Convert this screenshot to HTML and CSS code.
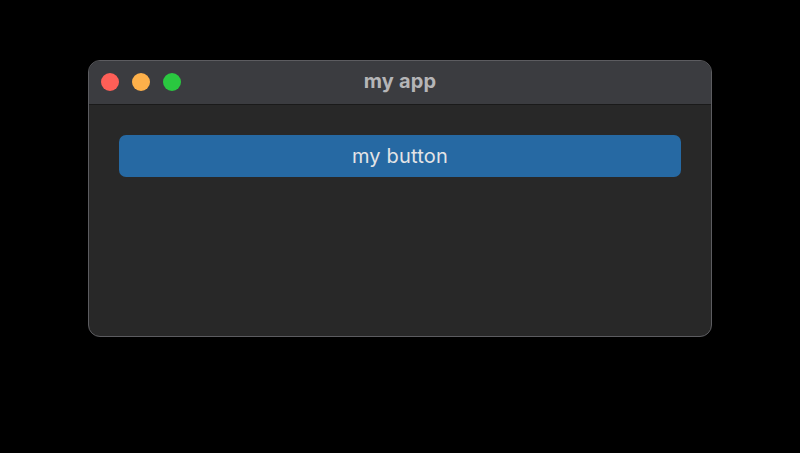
FILE: index.html
```html
<!DOCTYPE html>
<html>
<head>
<meta charset="utf-8">
<link rel="stylesheet" href="styles.css">
</head>
<body>
<div class="window">
  <div class="titlebar">
    <div class="lights">
      <span class="light red"></span>
      <span class="light yellow"></span>
      <span class="light green"></span>
    </div>
    <div class="title">my app</div>
  </div>
  <div class="content">
    <button class="btn">my button</button>
  </div>
</div>
</body>
</html>
```
FILE: styles.css
```css
html, body {
  margin: 0;
  background: #000;
  width: 800px;
  height: 453px;
  overflow: hidden;
}
body {
  padding: 60px 0 0 88px;
  box-sizing: border-box;
  font-family: Inter, "Liberation Sans", sans-serif;
}
.window {
  width: 624px;
  height: 277px;
  box-sizing: border-box;
  border: 1px solid #5c5c60;
  border-radius: 12px;
  overflow: hidden;
  background: #282828;
  display: flex;
  flex-direction: column;
}
.titlebar {
  position: relative;
  height: 43px;
  flex: none;
  background: #3b3c40;
  border-bottom: 1px solid #1a1a1a;
  display: flex;
  align-items: center;
  justify-content: center;
}
.lights {
  position: absolute;
  left: 12px;
  top: 12px;
  display: flex;
  gap: 13px;
}
.light {
  width: 18px;
  height: 18px;
  border-radius: 50%;
  display: block;
}
.red { background: #fe5f57; }
.yellow { background: #fdb04a; }
.green { background: #2ac840; }
.title {
  color: #b5b5b7;
  font-weight: 700;
  font-size: 20px;
  letter-spacing: 0.2px;
  margin-top: -4px;
}
.content {
  padding: 30px;
}
.btn {
  display: block;
  width: 100%;
  height: 42px;
  border: none;
  border-radius: 7px;
  background: #2669a3;
  color: #e4e4e6;
  font-family: Inter, "Liberation Sans", sans-serif;
  font-size: 20px;
  letter-spacing: 0.2px;
  padding: 0;
}
```
